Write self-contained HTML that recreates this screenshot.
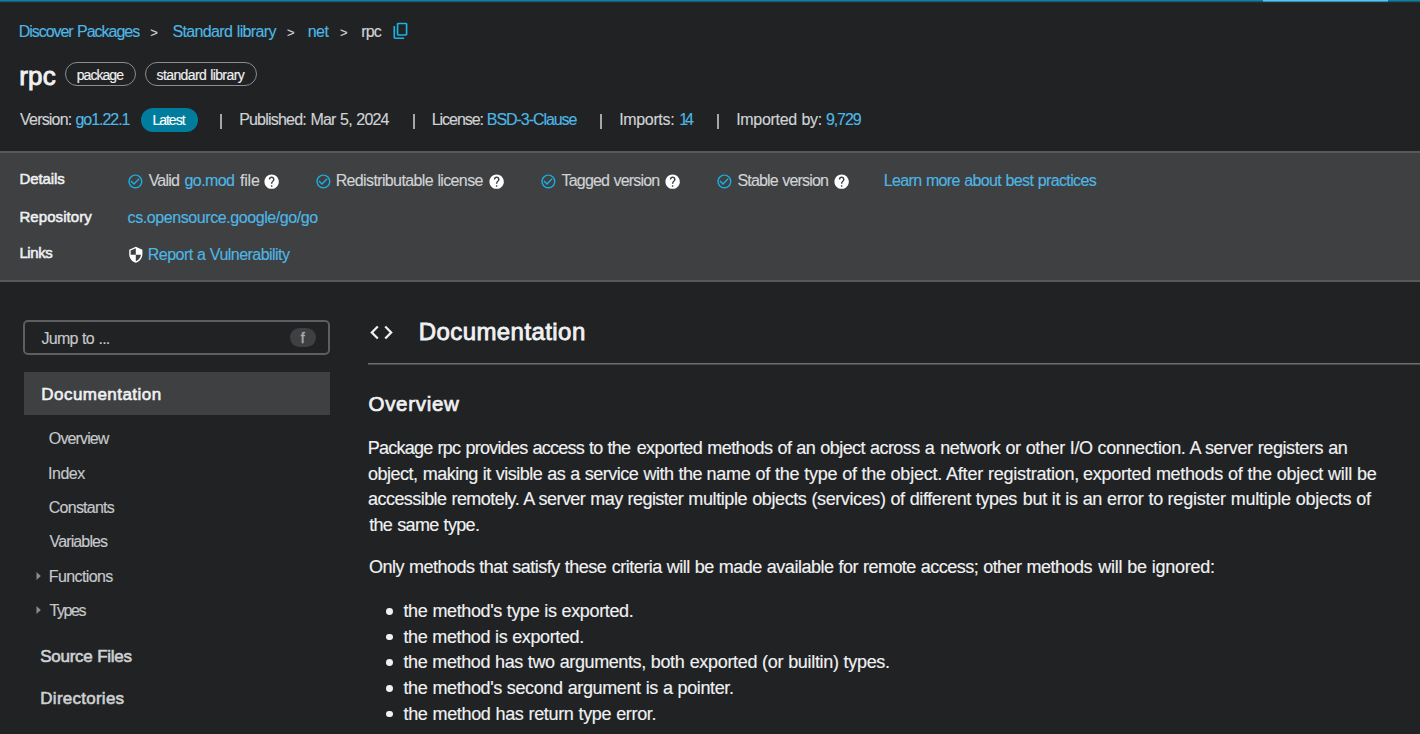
<!DOCTYPE html>
<html><head><meta charset="utf-8"><title>rpc package - net/rpc - Go Packages</title>
<style>
html,body{margin:0;padding:0}
body{background:#202224;width:1420px;height:734px;position:relative;overflow:hidden;font-family:"Liberation Sans", sans-serif}
.t{position:absolute;white-space:nowrap}
.a{position:absolute}
svg{position:absolute;display:block}
</style></head><body>

<div class="a" style="left:0;top:0;width:1420px;height:1px;background:#0088a8"></div>
<div class="a" style="left:0;top:1px;width:1420px;height:1px;background:#1d5566"></div>
<div class="a" style="left:0;top:2px;width:1420px;height:1px;background:#2e2b2a"></div>
<div class="a" style="left:1263px;top:0;width:125px;height:1px;background:#4fc4f6"></div>
<div class="a" style="left:1263px;top:1px;width:125px;height:1px;background:#3a8cb0"></div>
<svg style="left:390.5px;top:21.4px" width="19.7" height="19.7" viewBox="0 -960 960 960"><path fill="#1ab3e6" d="M360-240q-33 0-56.5-23.5T280-320v-480q0-33 23.5-56.5T360-880h360q33 0 56.5 23.5T800-800v480q0 33-23.5 56.5T720-240H360Zm0-80h360v-480H360v480ZM200-80q-33 0-56.5-23.5T120-160v-560h80v560h440v80H200Z"/></svg>
<div class="a" style="left:65px;top:62px;width:69px;height:22px;border:1px solid #8a8c8e;border-radius:12px"></div>
<div class="a" style="left:145px;top:62px;width:110px;height:22px;border:1px solid #8a8c8e;border-radius:12px"></div>
<div class="a" style="left:140.5px;top:108px;width:57px;height:23.5px;background:#007d9c;border-radius:12px"></div>
<div class="a" style="left:220px;top:113.6px;width:1.5px;height:15px;background:#a4a6a8"></div>
<div class="a" style="left:413px;top:113.6px;width:1.5px;height:15px;background:#a4a6a8"></div>
<div class="a" style="left:600px;top:113.6px;width:1.5px;height:15px;background:#a4a6a8"></div>
<div class="a" style="left:717px;top:113.6px;width:1.5px;height:15px;background:#a4a6a8"></div>
<div class="a" style="left:0;top:151px;width:1420px;height:2px;background:#58595b"></div>
<div class="a" style="left:0;top:153px;width:1420px;height:127px;background:#3e4042"></div>
<div class="a" style="left:0;top:280px;width:1420px;height:2px;background:#58595b"></div>
<svg style="left:126.90px;top:173.00px" width="16.80" height="16.80" viewBox="0 0 24 24"><path fill="#1bb0e2" d="M16.59 7.58L10 14.17l-3.59-3.58L5 12l5 5 8-8zM12 2C6.48 2 2 6.48 2 12s4.48 10 10 10 10-4.48 10-10S17.52 2 12 2zm0 18c-4.42 0-8-3.58-8-8s3.58-8 8-8 8 3.58 8 8-3.58 8-8 8z"/></svg>
<svg style="left:314.60px;top:173.00px" width="16.80" height="16.80" viewBox="0 0 24 24"><path fill="#1bb0e2" d="M16.59 7.58L10 14.17l-3.59-3.58L5 12l5 5 8-8zM12 2C6.48 2 2 6.48 2 12s4.48 10 10 10 10-4.48 10-10S17.52 2 12 2zm0 18c-4.42 0-8-3.58-8-8s3.58-8 8-8 8 3.58 8 8-3.58 8-8 8z"/></svg>
<svg style="left:539.80px;top:173.00px" width="16.80" height="16.80" viewBox="0 0 24 24"><path fill="#1bb0e2" d="M16.59 7.58L10 14.17l-3.59-3.58L5 12l5 5 8-8zM12 2C6.48 2 2 6.48 2 12s4.48 10 10 10 10-4.48 10-10S17.52 2 12 2zm0 18c-4.42 0-8-3.58-8-8s3.58-8 8-8 8 3.58 8 8-3.58 8-8 8z"/></svg>
<svg style="left:715.60px;top:173.00px" width="16.80" height="16.80" viewBox="0 0 24 24"><path fill="#1bb0e2" d="M16.59 7.58L10 14.17l-3.59-3.58L5 12l5 5 8-8zM12 2C6.48 2 2 6.48 2 12s4.48 10 10 10 10-4.48 10-10S17.52 2 12 2zm0 18c-4.42 0-8-3.58-8-8s3.58-8 8-8 8 3.58 8 8-3.58 8-8 8z"/></svg>
<svg style="left:263.26px;top:172.86px" width="17.28" height="17.28" viewBox="0 0 24 24"><path fill="#ffffff" d="M12 2C6.48 2 2 6.48 2 12s4.48 10 10 10 10-4.48 10-10S17.52 2 12 2zm1 17h-2v-2h2v2zm2.07-7.75l-.9.92C13.45 12.9 13 13.5 13 15h-2v-.5c0-1.1.45-2.1 1.17-2.83l1.24-1.26c.37-.36.59-.86.59-1.41 0-1.1-.9-2-2-2s-2 .9-2 2H8c0-2.21 1.79-4 4-4s4 1.79 4 4c0 .88-.36 1.68-.93 2.25z"/></svg>
<svg style="left:488.16px;top:172.86px" width="17.28" height="17.28" viewBox="0 0 24 24"><path fill="#ffffff" d="M12 2C6.48 2 2 6.48 2 12s4.48 10 10 10 10-4.48 10-10S17.52 2 12 2zm1 17h-2v-2h2v2zm2.07-7.75l-.9.92C13.45 12.9 13 13.5 13 15h-2v-.5c0-1.1.45-2.1 1.17-2.83l1.24-1.26c.37-.36.59-.86.59-1.41 0-1.1-.9-2-2-2s-2 .9-2 2H8c0-2.21 1.79-4 4-4s4 1.79 4 4c0 .88-.36 1.68-.93 2.25z"/></svg>
<svg style="left:664.26px;top:172.86px" width="17.28" height="17.28" viewBox="0 0 24 24"><path fill="#ffffff" d="M12 2C6.48 2 2 6.48 2 12s4.48 10 10 10 10-4.48 10-10S17.52 2 12 2zm1 17h-2v-2h2v2zm2.07-7.75l-.9.92C13.45 12.9 13 13.5 13 15h-2v-.5c0-1.1.45-2.1 1.17-2.83l1.24-1.26c.37-.36.59-.86.59-1.41 0-1.1-.9-2-2-2s-2 .9-2 2H8c0-2.21 1.79-4 4-4s4 1.79 4 4c0 .88-.36 1.68-.93 2.25z"/></svg>
<svg style="left:832.86px;top:172.86px" width="17.28" height="17.28" viewBox="0 0 24 24"><path fill="#ffffff" d="M12 2C6.48 2 2 6.48 2 12s4.48 10 10 10 10-4.48 10-10S17.52 2 12 2zm1 17h-2v-2h2v2zm2.07-7.75l-.9.92C13.45 12.9 13 13.5 13 15h-2v-.5c0-1.1.45-2.1 1.17-2.83l1.24-1.26c.37-.36.59-.86.59-1.41 0-1.1-.9-2-2-2s-2 .9-2 2H8c0-2.21 1.79-4 4-4s4 1.79 4 4c0 .88-.36 1.68-.93 2.25z"/></svg>
<svg style="left:126.60px;top:246.27px" width="17.60" height="17.60" viewBox="0 0 24 24"><path fill="#ffffff" d="M12 1L3 5v6c0 5.55 3.84 10.74 9 12 5.16-1.26 9-6.45 9-12V5l-9-4zm0 10.99h7c-.53 4.12-3.28 7.79-7 8.94V12H5V6.3l7-3.11v8.8z"/></svg>
<div class="a" style="left:23px;top:320px;width:303px;height:31px;border:2px solid #5c5e60;border-radius:5px"></div>
<div class="a" style="left:290px;top:327.6px;width:26px;height:19.6px;background:#3e4042;border-radius:10px"></div>
<div class="a" style="left:24px;top:371.5px;width:306px;height:43px;background:#3e4042"></div>
<svg style="left:36px;top:571px" width="6" height="10" viewBox="0 0 6 10"><path fill="#8a8c8e" d="M0.5 1L4.8 5L0.5 9Z"/></svg>
<svg style="left:36px;top:605px" width="6" height="10" viewBox="0 0 6 10"><path fill="#8a8c8e" d="M0.5 1L4.8 5L0.5 9Z"/></svg>
<svg style="left:368.25px;top:319.25px" width="27" height="27" viewBox="0 0 24 24"><path fill="#f0f1f2" d="M9.4 16.6L4.8 12l4.6-4.6L8 6l-6 6 6 6 1.4-1.4zm5.2 0l4.6-4.6-4.6-4.6L16 6l6 6-6 6-1.4-1.4z"/></svg>
<div class="a" style="left:368px;top:363px;width:1052px;height:1px;background:#6c6e70"></div>
<div class="a" style="left:368px;top:364px;width:1052px;height:1px;background:#474a4c"></div>
<div class="a" style="left:386.4px;top:607.90px;width:6.8px;height:6.8px;border-radius:50%;background:#f0f1f2"></div>
<div class="a" style="left:386.4px;top:633.60px;width:6.8px;height:6.8px;border-radius:50%;background:#f0f1f2"></div>
<div class="a" style="left:386.4px;top:659.20px;width:6.8px;height:6.8px;border-radius:50%;background:#f0f1f2"></div>
<div class="a" style="left:386.4px;top:684.90px;width:6.8px;height:6.8px;border-radius:50%;background:#f0f1f2"></div>
<div class="a" style="left:386.4px;top:710.60px;width:6.8px;height:6.8px;border-radius:50%;background:#f0f1f2"></div>
<div class="t" style="left:18.64px;top:24.00px;font-size:16px;line-height:16px;letter-spacing:-1.027px;word-spacing:1.027px;font-weight:normal;-webkit-text-stroke:0.15px #4fb6e3;color:#4fb6e3">Discover Packages</div>
<div class="t" style="left:150.32px;top:26.00px;font-size:13px;line-height:13px;letter-spacing:0.000px;word-spacing:0.000px;font-weight:normal;-webkit-text-stroke:0.15px #d0d2d4;color:#d0d2d4">&gt;</div>
<div class="t" style="left:172.50px;top:24.00px;font-size:16px;line-height:16px;letter-spacing:-0.644px;word-spacing:0.644px;font-weight:normal;-webkit-text-stroke:0.15px #4fb6e3;color:#4fb6e3">Standard library</div>
<div class="t" style="left:287.00px;top:26.00px;font-size:13px;line-height:13px;letter-spacing:0.000px;word-spacing:0.000px;font-weight:normal;-webkit-text-stroke:0.15px #d0d2d4;color:#d0d2d4">&gt;</div>
<div class="t" style="left:307.64px;top:24.00px;font-size:16px;line-height:16px;letter-spacing:-0.480px;word-spacing:0.480px;font-weight:normal;-webkit-text-stroke:0.15px #4fb6e3;color:#4fb6e3">net</div>
<div class="t" style="left:340.00px;top:26.00px;font-size:13px;line-height:13px;letter-spacing:0.000px;word-spacing:0.000px;font-weight:normal;-webkit-text-stroke:0.15px #d0d2d4;color:#d0d2d4">&gt;</div>
<div class="t" style="left:361.20px;top:24.00px;font-size:16px;line-height:16px;letter-spacing:-0.800px;word-spacing:0.800px;font-weight:normal;-webkit-text-stroke:0.15px #d0d2d4;color:#d0d2d4">rpc</div>
<div class="t" style="left:19.20px;top:63.00px;font-size:26px;line-height:26px;letter-spacing:0.240px;word-spacing:-0.240px;font-weight:normal;-webkit-text-stroke:0.91px #f0f1f2;color:#f0f1f2">rpc</div>
<div class="t" style="left:76.76px;top:68.00px;font-size:14px;line-height:14px;letter-spacing:-0.960px;word-spacing:0.960px;font-weight:normal;-webkit-text-stroke:0.15px #f0f1f2;color:#f0f1f2">package</div>
<div class="t" style="left:156.50px;top:68.00px;font-size:14px;line-height:14px;letter-spacing:-0.592px;word-spacing:0.592px;font-weight:normal;-webkit-text-stroke:0.15px #f0f1f2;color:#f0f1f2">standard library</div>
<div class="t" style="left:20.06px;top:112.00px;font-size:16px;line-height:16px;letter-spacing:-0.800px;word-spacing:0.800px;font-weight:normal;-webkit-text-stroke:0.15px #d0d2d4;color:#d0d2d4">Version:</div>
<div class="t" style="left:75.44px;top:112.00px;font-size:16px;line-height:16px;letter-spacing:-1.029px;word-spacing:1.029px;font-weight:normal;-webkit-text-stroke:0.15px #4fb6e3;color:#4fb6e3">go1.22.1</div>
<div class="t" style="left:152.38px;top:113.00px;font-size:14px;line-height:14px;letter-spacing:-0.992px;word-spacing:0.992px;font-weight:normal;-webkit-text-stroke:0.15px #ffffff;color:#ffffff">Latest</div>
<div class="t" style="left:239.14px;top:112.00px;font-size:16px;line-height:16px;letter-spacing:-0.787px;word-spacing:0.787px;font-weight:normal;-webkit-text-stroke:0.15px #d0d2d4;color:#d0d2d4">Published: Mar 5, 2024</div>
<div class="t" style="left:431.76px;top:112.00px;font-size:16px;line-height:16px;letter-spacing:-1.051px;word-spacing:1.051px;font-weight:normal;-webkit-text-stroke:0.15px #d0d2d4;color:#d0d2d4">License:</div>
<div class="t" style="left:486.82px;top:112.00px;font-size:16px;line-height:16px;letter-spacing:-1.062px;word-spacing:1.062px;font-weight:normal;-webkit-text-stroke:0.15px #4fb6e3;color:#4fb6e3">BSD-3-Clause</div>
<div class="t" style="left:619.20px;top:112.00px;font-size:16px;line-height:16px;letter-spacing:-0.343px;word-spacing:0.343px;font-weight:normal;-webkit-text-stroke:0.15px #d0d2d4;color:#d0d2d4">Imports:</div>
<div class="t" style="left:679.20px;top:112.00px;font-size:16px;line-height:16px;letter-spacing:-3.200px;word-spacing:3.200px;font-weight:normal;-webkit-text-stroke:0.15px #4fb6e3;color:#4fb6e3">14</div>
<div class="t" style="left:736.20px;top:112.00px;font-size:16px;line-height:16px;letter-spacing:-0.295px;word-spacing:0.295px;font-weight:normal;-webkit-text-stroke:0.15px #d0d2d4;color:#d0d2d4">Imported by:</div>
<div class="t" style="left:826.00px;top:112.00px;font-size:16px;line-height:16px;letter-spacing:-1.120px;word-spacing:1.120px;font-weight:normal;-webkit-text-stroke:0.15px #4fb6e3;color:#4fb6e3">9,729</div>
<div class="t" style="left:19.38px;top:171.00px;font-size:15px;line-height:15px;letter-spacing:-0.080px;word-spacing:0.080px;font-weight:normal;-webkit-text-stroke:0.53px #f0f1f2;color:#f0f1f2">Details</div>
<div class="t" style="left:19.38px;top:209.00px;font-size:15px;line-height:15px;letter-spacing:0.089px;word-spacing:-0.089px;font-weight:normal;-webkit-text-stroke:0.53px #f0f1f2;color:#f0f1f2">Repository</div>
<div class="t" style="left:19.38px;top:245.00px;font-size:15px;line-height:15px;letter-spacing:-0.400px;word-spacing:0.400px;font-weight:normal;-webkit-text-stroke:0.53px #f0f1f2;color:#f0f1f2">Links</div>
<div class="t" style="left:148.68px;top:173.00px;font-size:16px;line-height:16px;letter-spacing:-0.800px;word-spacing:0.800px;font-weight:normal;-webkit-text-stroke:0.15px #d0d2d4;color:#d0d2d4">Valid</div>
<div class="t" style="left:184.50px;top:173.00px;font-size:16px;line-height:16px;letter-spacing:-0.576px;word-spacing:0.576px;font-weight:normal;-webkit-text-stroke:0.15px #4fb6e3;color:#4fb6e3">go.mod</div>
<div class="t" style="left:240.00px;top:173.00px;font-size:16px;line-height:16px;letter-spacing:-0.213px;word-spacing:0.213px;font-weight:normal;-webkit-text-stroke:0.15px #d0d2d4;color:#d0d2d4">file</div>
<div class="t" style="left:335.64px;top:173.00px;font-size:16px;line-height:16px;letter-spacing:-0.628px;word-spacing:0.628px;font-weight:normal;-webkit-text-stroke:0.15px #d0d2d4;color:#d0d2d4">Redistributable license</div>
<div class="t" style="left:561.56px;top:173.00px;font-size:16px;line-height:16px;letter-spacing:-0.822px;word-spacing:0.822px;font-weight:normal;-webkit-text-stroke:0.15px #d0d2d4;color:#d0d2d4">Tagged version</div>
<div class="t" style="left:737.50px;top:173.00px;font-size:16px;line-height:16px;letter-spacing:-0.830px;word-spacing:0.830px;font-weight:normal;-webkit-text-stroke:0.15px #d0d2d4;color:#d0d2d4">Stable version</div>
<div class="t" style="left:883.70px;top:173.00px;font-size:16px;line-height:16px;letter-spacing:-0.632px;word-spacing:0.632px;font-weight:normal;-webkit-text-stroke:0.15px #4fb6e3;color:#4fb6e3">Learn more about best practices</div>
<div class="t" style="left:127.56px;top:210.00px;font-size:16px;line-height:16px;letter-spacing:-0.416px;word-spacing:0.416px;font-weight:normal;-webkit-text-stroke:0.15px #4fb6e3;color:#4fb6e3">cs.opensource.google/go/go</div>
<div class="t" style="left:147.76px;top:247.00px;font-size:16px;line-height:16px;letter-spacing:-0.531px;word-spacing:0.531px;font-weight:normal;-webkit-text-stroke:0.15px #4fb6e3;color:#4fb6e3">Report a Vulnerability</div>
<div class="t" style="left:41.44px;top:331.00px;font-size:16px;line-height:16px;letter-spacing:-0.728px;word-spacing:0.728px;font-weight:normal;-webkit-text-stroke:0.15px #c6c8ca;color:#c6c8ca">Jump to ...</div>
<div class="t" style="left:300.72px;top:331.00px;font-size:14px;line-height:14px;letter-spacing:0.000px;word-spacing:0.000px;font-weight:normal;-webkit-text-stroke:0.49px #aaacae;color:#aaacae">f</div>
<div class="t" style="left:41.32px;top:386.00px;font-size:17px;line-height:17px;letter-spacing:0.453px;word-spacing:-0.453px;font-weight:normal;-webkit-text-stroke:0.60px #f0f1f2;color:#f0f1f2">Documentation</div>
<div class="t" style="left:48.82px;top:431.00px;font-size:16px;line-height:16px;letter-spacing:-0.869px;word-spacing:0.869px;font-weight:normal;-webkit-text-stroke:0.15px #c6c8ca;color:#c6c8ca">Overview</div>
<div class="t" style="left:48.02px;top:466.00px;font-size:16px;line-height:16px;letter-spacing:-0.480px;word-spacing:0.480px;font-weight:normal;-webkit-text-stroke:0.15px #c6c8ca;color:#c6c8ca">Index</div>
<div class="t" style="left:48.82px;top:500.00px;font-size:16px;line-height:16px;letter-spacing:-0.760px;word-spacing:0.760px;font-weight:normal;-webkit-text-stroke:0.15px #c6c8ca;color:#c6c8ca">Constants</div>
<div class="t" style="left:49.62px;top:534.00px;font-size:16px;line-height:16px;letter-spacing:-0.880px;word-spacing:0.880px;font-weight:normal;-webkit-text-stroke:0.15px #c6c8ca;color:#c6c8ca">Variables</div>
<div class="t" style="left:48.82px;top:569.00px;font-size:16px;line-height:16px;letter-spacing:-0.620px;word-spacing:0.620px;font-weight:normal;-webkit-text-stroke:0.15px #c6c8ca;color:#c6c8ca">Functions</div>
<div class="t" style="left:49.62px;top:603.00px;font-size:16px;line-height:16px;letter-spacing:-1.440px;word-spacing:1.440px;font-weight:normal;-webkit-text-stroke:0.15px #c6c8ca;color:#c6c8ca">Types</div>
<div class="t" style="left:40.32px;top:648.00px;font-size:17px;line-height:17px;letter-spacing:-0.277px;word-spacing:0.277px;font-weight:normal;-webkit-text-stroke:0.60px #cfd1d3;color:#cfd1d3">Source Files</div>
<div class="t" style="left:40.32px;top:690.00px;font-size:17px;line-height:17px;letter-spacing:0.256px;word-spacing:-0.256px;font-weight:normal;-webkit-text-stroke:0.60px #cfd1d3;color:#cfd1d3">Directories</div>
<div class="t" style="left:418.70px;top:320.00px;font-size:24px;line-height:24px;letter-spacing:0.427px;word-spacing:-0.427px;font-weight:normal;-webkit-text-stroke:0.84px #f0f1f2;color:#f0f1f2">Documentation</div>
<div class="t" style="left:368.50px;top:394.00px;font-size:20.5px;line-height:20.5px;letter-spacing:0.709px;word-spacing:-0.709px;font-weight:normal;-webkit-text-stroke:0.72px #f0f1f2;color:#f0f1f2">Overview</div>
<div class="t" style="left:367.76px;top:439.00px;font-size:18px;line-height:18px;letter-spacing:-0.743px;word-spacing:0.743px;font-weight:normal;-webkit-text-stroke:0.15px #f0f1f2;color:#f0f1f2">Package rpc provides access to the</div>
<div class="t" style="left:636.64px;top:439.00px;font-size:18px;line-height:18px;letter-spacing:-0.552px;word-spacing:0.552px;font-weight:normal;-webkit-text-stroke:0.15px #f0f1f2;color:#f0f1f2">exported methods of an object across a</div>
<div class="t" style="left:940.20px;top:439.00px;font-size:18px;line-height:18px;letter-spacing:-0.391px;word-spacing:0.391px;font-weight:normal;-webkit-text-stroke:0.15px #f0f1f2;color:#f0f1f2">network or other I/O connection. A server registers an</div>
<div class="t" style="left:368.06px;top:465.00px;font-size:18px;line-height:18px;letter-spacing:-0.493px;word-spacing:0.493px;font-weight:normal;-webkit-text-stroke:0.15px #f0f1f2;color:#f0f1f2">object, making it visible as a service with the</div>
<div class="t" style="left:706.62px;top:465.00px;font-size:18px;line-height:18px;letter-spacing:-0.273px;word-spacing:0.273px;font-weight:normal;-webkit-text-stroke:0.15px #f0f1f2;color:#f0f1f2">name of the type of the</div>
<div class="t" style="left:890.56px;top:465.00px;font-size:18px;line-height:18px;letter-spacing:-0.220px;word-spacing:0.220px;font-weight:normal;-webkit-text-stroke:0.15px #f0f1f2;color:#f0f1f2">object. After registration,</div>
<div class="t" style="left:1083.06px;top:465.00px;font-size:18px;line-height:18px;letter-spacing:-0.274px;word-spacing:0.274px;font-weight:normal;-webkit-text-stroke:0.15px #f0f1f2;color:#f0f1f2">exported methods of the object will be</div>
<div class="t" style="left:368.06px;top:490.00px;font-size:18px;line-height:18px;letter-spacing:-0.560px;word-spacing:0.560px;font-weight:normal;-webkit-text-stroke:0.15px #f0f1f2;color:#f0f1f2">accessible remotely. A server may register</div>
<div class="t" style="left:688.34px;top:490.00px;font-size:18px;line-height:18px;letter-spacing:-0.396px;word-spacing:0.396px;font-weight:normal;-webkit-text-stroke:0.15px #f0f1f2;color:#f0f1f2">multiple objects (services) of different types</div>
<div class="t" style="left:1022.78px;top:490.00px;font-size:18px;line-height:18px;letter-spacing:-0.309px;word-spacing:0.309px;font-weight:normal;-webkit-text-stroke:0.15px #f0f1f2;color:#f0f1f2">but it is an error to</div>
<div class="t" style="left:1167.62px;top:490.00px;font-size:18px;line-height:18px;letter-spacing:-0.240px;word-spacing:0.240px;font-weight:normal;-webkit-text-stroke:0.15px #f0f1f2;color:#f0f1f2">register multiple objects of</div>
<div class="t" style="left:369.18px;top:516.00px;font-size:18px;line-height:18px;letter-spacing:-0.663px;word-spacing:0.663px;font-weight:normal;-webkit-text-stroke:0.15px #f0f1f2;color:#f0f1f2">the same type.</div>
<div class="t" style="left:369.00px;top:558.00px;font-size:18px;line-height:18px;letter-spacing:-0.517px;word-spacing:0.517px;font-weight:normal;-webkit-text-stroke:0.15px #f0f1f2;color:#f0f1f2">Only methods that satisfy these</div>
<div class="t" style="left:611.64px;top:558.00px;font-size:18px;line-height:18px;letter-spacing:-0.491px;word-spacing:0.491px;font-weight:normal;-webkit-text-stroke:0.15px #f0f1f2;color:#f0f1f2">criteria will be made available for</div>
<div class="t" style="left:862.98px;top:558.00px;font-size:18px;line-height:18px;letter-spacing:-0.527px;word-spacing:0.527px;font-weight:normal;-webkit-text-stroke:0.15px #f0f1f2;color:#f0f1f2">remote access; other methods</div>
<div class="t" style="left:1098.22px;top:558.00px;font-size:18px;line-height:18px;letter-spacing:-0.246px;word-spacing:0.246px;font-weight:normal;-webkit-text-stroke:0.15px #f0f1f2;color:#f0f1f2">will be ignored:</div>
<div class="t" style="left:403.50px;top:602.00px;font-size:18px;line-height:18px;letter-spacing:-0.377px;word-spacing:0.377px;font-weight:normal;-webkit-text-stroke:0.15px #f0f1f2;color:#f0f1f2">the method's type is exported.</div>
<div class="t" style="left:403.50px;top:628.00px;font-size:18px;line-height:18px;letter-spacing:-0.393px;word-spacing:0.393px;font-weight:normal;-webkit-text-stroke:0.15px #f0f1f2;color:#f0f1f2">the method is exported.</div>
<div class="t" style="left:403.50px;top:653.00px;font-size:18px;line-height:18px;letter-spacing:-0.394px;word-spacing:0.394px;font-weight:normal;-webkit-text-stroke:0.15px #f0f1f2;color:#f0f1f2">the method has two arguments, both</div>
<div class="t" style="left:689.64px;top:653.00px;font-size:18px;line-height:18px;letter-spacing:-0.320px;word-spacing:0.320px;font-weight:normal;-webkit-text-stroke:0.15px #f0f1f2;color:#f0f1f2">exported (or builtin) types.</div>
<div class="t" style="left:403.50px;top:679.00px;font-size:18px;line-height:18px;letter-spacing:-0.377px;word-spacing:0.377px;font-weight:normal;-webkit-text-stroke:0.15px #f0f1f2;color:#f0f1f2">the method's second argument is a pointer.</div>
<div class="t" style="left:403.50px;top:705.00px;font-size:18px;line-height:18px;letter-spacing:-0.340px;word-spacing:0.340px;font-weight:normal;-webkit-text-stroke:0.15px #f0f1f2;color:#f0f1f2">the method has return type error.</div>
</body></html>
